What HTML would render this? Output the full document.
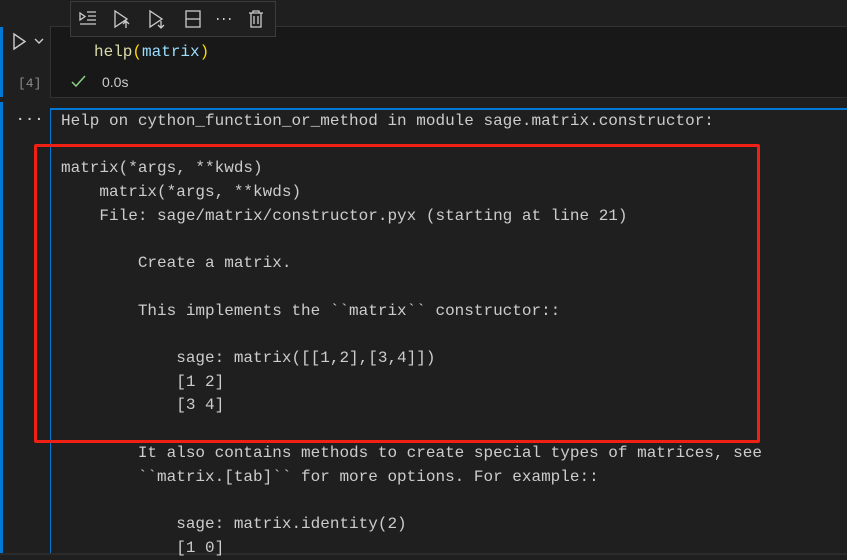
<!DOCTYPE html><html><head><style>
body{margin:0;width:847px;height:555px;background:#1f1f1f;overflow:hidden;position:relative;font-family:"Liberation Mono",monospace}
.a{position:absolute}
pre{margin:0;font-family:"Liberation Mono",monospace;font-size:16px;line-height:23.7px;color:#cccccc}
</style></head><body>
<div class="a" style="left:0;top:27px;width:3px;height:70px;background:#0078d4"></div>
<div class="a" style="left:0;top:102px;width:3px;height:453px;background:#0078d4"></div>
<div class="a" style="left:50px;top:26px;width:800px;height:70px;background:#181818;border:1px solid #333"></div>
<div class="a" style="left:50px;top:108px;width:800px;height:2px;background:#0078d4"></div>
<div class="a" style="left:50px;top:108px;width:1px;height:447px;background:#0078d4"></div>
<div class="a" style="left:0;top:553px;width:847px;height:2px;background:#2b2b2b"></div>
<div class="a" style="left:70px;top:1px;width:204px;height:34px;background:#1f1f1f;border:1px solid #3c3c3c"></div>
<svg class="a" style="left:70px;top:1px" width="206" height="36" fill="none" stroke="#cccccc" stroke-width="1.3">
<path d="M10 12l5 3.5-5 3.5z M17 11h9 M18 15h8 M17 19h9 M10 23h16"/>
<path d="M45 10v16l12-8z M56 20v7 M53 23l3-3 3 3"/>
<path d="M80 10v16l12-8z M91 20v7 M88 24l3 3 3-3"/>
<rect x="116" y="10" width="14" height="16"/><path d="M116 18h14"/>
<path d="M147 18h1.5 M153 18h1.5 M159 18h1.5" stroke-width="2"/>
<path d="M179 12h14 M183 12v-2h6v2 M181 12v14h10v-14 M184 15v8 M188 15v8"/>
</svg>
<svg class="a" style="left:10px;top:32px" width="40" height="20" fill="none" stroke="#cccccc" stroke-width="1.4">
<path d="M4 2v15l11-7.5z M25 7l4 4 4-4"/></svg>
<div class="a" style="left:18px;top:76px;font-size:13px;color:#8b8b8b;font-family:'Liberation Mono',monospace">[4]</div>
<div class="a" style="left:94px;top:43px;font-size:16px;color:#dcdcaa;font-family:'Liberation Mono',monospace">help<span style="color:#ffd700">(</span><span style="color:#9cdcfe">matrix</span><span style="color:#ffd700">)</span></div>
<svg class="a" style="left:70px;top:74px" width="20" height="16" fill="none" stroke="#89d185" stroke-width="1.5"><path d="M2 8l4 4 9-10"/></svg>
<div class="a" style="left:102px;top:74px;font-size:14px;color:#cccccc;font-family:'Liberation Sans',sans-serif">0.0s</div>
<div class="a" style="left:16px;top:112px;color:#cccccc;font-size:14px;letter-spacing:1px;font-weight:bold">···</div>
<pre class="a" style="left:61px;top:110px">Help on cython_function_or_method in module sage.matrix.constructor:

matrix(*args, **kwds)
    matrix(*args, **kwds)
    File: sage/matrix/constructor.pyx (starting at line 21)

        Create a matrix.

        This implements the ``matrix`` constructor::

            sage: matrix([[1,2],[3,4]])
            [1 2]
            [3 4]

        It also contains methods to create special types of matrices, see
        ``matrix.[tab]`` for more options. For example::

            sage: matrix.identity(2)
            [1 0]</pre>
<div class="a" style="left:34px;top:144px;width:720px;height:293px;border:3px solid #f02015;border-radius:2px"></div>
</body></html>
